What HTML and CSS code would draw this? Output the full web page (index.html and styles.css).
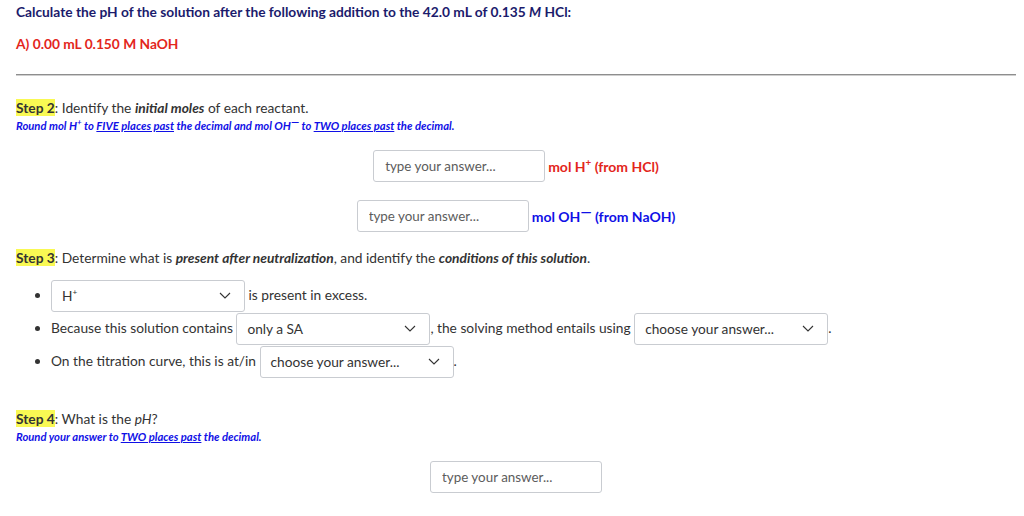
FILE: index.html
```html
<!DOCTYPE html>
<html lang="en">
<head>
  <meta charset="UTF-8" />
  <title>Titration problem</title>
  <link rel="stylesheet" href="styles.css">
</head>
<body>
  <p class="title">Calculate the pH of the solution after the following addition to the 42.0 mL of 0.135 <i>M</i> HCl:</p>
  <p class="part">A) 0.00 mL 0.150 M NaOH</p>
  <hr class="divider">

  <p class="step"><span class="mark">Step 2</span>: Identify the <b><i>initial moles</i></b> of each reactant.</p>
  <p class="hint">Round mol H<sup>+</sup> to <u>FIVE places past</u> the decimal and mol OH<sup class="bar">—</sup> to <u>TWO places past</u> the decimal.</p>

  <div class="answer-row first">
    <input class="answer" type="text" placeholder="type your answer...">
    <span class="unit red">mol H<sup>+</sup> (from HCl)</span>
  </div>
  <div class="answer-row">
    <input class="answer" type="text" placeholder="type your answer...">
    <span class="unit blue">mol OH<sup class="bar">—</sup> (from NaOH)</span>
  </div>

  <p class="step gap"><span class="mark">Step 3</span>: Determine what is <b><i>present after neutralization</i></b>, and identify the <b><i>conditions of this solution</i></b>.</p>
  <ul class="choices">
    <li><span class="select"><span>H<sup class="small">+</sup></span><svg width="12" height="7" viewBox="0 0 12 7"><path d="M1 1l5 5 5-5" fill="none" stroke="#333" stroke-width="1.1"/></svg></span> is present in excess.</li>
    <li>Because this solution contains <span class="select"><span>only a SA</span><svg width="12" height="7" viewBox="0 0 12 7"><path d="M1 1l5 5 5-5" fill="none" stroke="#333" stroke-width="1.1"/></svg></span>, the solving method entails using <span class="select"><span>choose your answer...</span><svg width="12" height="7" viewBox="0 0 12 7"><path d="M1 1l5 5 5-5" fill="none" stroke="#333" stroke-width="1.1"/></svg></span>.</li>
    <li>On the titration curve, this is at/in <span class="select"><span>choose your answer...</span><svg width="12" height="7" viewBox="0 0 12 7"><path d="M1 1l5 5 5-5" fill="none" stroke="#333" stroke-width="1.1"/></svg></span>.</li>
  </ul>

  <p class="step late"><span class="mark">Step 4</span>: What is the <i>pH</i>?</p>
  <p class="hint">Round your answer to <u>TWO places past</u> the decimal.</p>
  <div class="answer-row first">
    <input class="answer" type="text" placeholder="type your answer...">
  </div>
</body>
</html>
```

FILE: styles.css
```css
body {
  font-family: Lato, "Open Sans", sans-serif;
  font-size: 13.75px;
  color: #333;
  margin: 0;
  padding: 3px 8px 0 16px;
}

p {
  margin: 0;
}

.title {
  line-height: 18px;
  font-weight: bold;
  color: #1b1b6c;
}

.part {
  margin-top: 14px;
  line-height: 18px;
  font-weight: bold;
  color: #e3261b;
}

.divider {
  height: 0;
  margin: 21px 0 0;
  border: 0;
  border-top: 1px solid #8e8e8e;
  border-bottom: 1px solid #cfcfcf;
}

.step {
  margin-top: 23px;
  line-height: 18px;
}

.step.gap {
  margin-top: 17px;
}

.step.late {
  margin-top: 33px;
}

.mark {
  background: #f9f953;
  font-weight: bold;
}

.hint {
  margin-top: 2px;
  line-height: 14px;
  font-size: 11.25px;
  font-style: italic;
  font-weight: bold;
  color: #1010e6;
}

sup {
  font-size: 0.7em;
  line-height: 0;
}

sup.bar {
  font-size: 1em;
  vertical-align: 0.35em;
}

sup.small {
  font-size: 0.6em;
}

.answer-row {
  display: flex;
  justify-content: center;
  align-items: center;
  gap: 3px;
  margin-top: 18px;
}

.answer-row.first {
  margin-top: 17px;
}

.answer {
  width: 172px;
  height: 32px;
  box-sizing: border-box;
  padding: 0 11px;
  border: 1px solid #c9ccd1;
  border-radius: 3px;
  font-family: inherit;
  font-size: 13.4px;
  color: #333;
  outline: none;
}

.answer::placeholder {
  color: #5c5c5c;
}

.unit {
  font-size: 14px;
  font-weight: bold;
}

.red {
  color: #e3261b;
}

.blue {
  color: #1010e6;
}

.choices {
  margin: 11px 0 0;
  padding-left: 35px;
}

.choices li {
  height: 33px;
  line-height: 33px;
}

.select {
  display: inline-flex;
  align-items: center;
  justify-content: space-between;
  width: 194px;
  height: 32px;
  box-sizing: border-box;
  padding: 0 10px;
  border: 1px solid #c9ccd1;
  border-radius: 3px;
  vertical-align: middle;
  position: relative;
  top: -1px;
  font-size: 13.7px;
  line-height: 1;
}

.select svg {
  margin-right: 3px;
}
```
